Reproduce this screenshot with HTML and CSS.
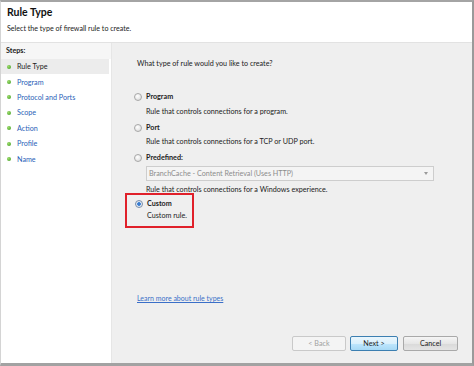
FILE: index.html
```html
<!DOCTYPE html>
<html>
<head>
<meta charset="utf-8">
<link rel="stylesheet" href="styles.css">
</head>
<body>
<div class="window">
  <header class="head">
    <h1 class="title">Rule Type</h1>
    <p class="subtitle">Select the type of firewall rule to create.</p>
  </header>
  <div class="body">
    <aside class="steps">
      <div class="steps-title">Steps:</div>
      <ul class="step-list">
        <li class="step current"><span class="dot"></span>Rule Type</li>
        <li class="step"><span class="dot"></span>Program</li>
        <li class="step"><span class="dot"></span>Protocol and Ports</li>
        <li class="step"><span class="dot"></span>Scope</li>
        <li class="step"><span class="dot"></span>Action</li>
        <li class="step"><span class="dot"></span>Profile</li>
        <li class="step"><span class="dot"></span>Name</li>
      </ul>
    </aside>
    <main class="content">
      <p class="question">What type of rule would you like to create?</p>
      <div class="options">
        <div class="option opt-program">
          <span class="radio"></span>
          <div class="opt-text">
            <div class="opt-label">Program</div>
            <div class="opt-desc">Rule that controls connections for a program.</div>
          </div>
        </div>
        <div class="option opt-port">
          <span class="radio"></span>
          <div class="opt-text">
            <div class="opt-label">Port</div>
            <div class="opt-desc">Rule that controls connections for a TCP or UDP port.</div>
          </div>
        </div>
        <div class="option opt-predef">
          <span class="radio"></span>
          <div class="opt-text wide">
            <div class="opt-label">Predefined:</div>
            <div class="select"><span class="select-text">BranchCache - Content Retrieval (Uses HTTP)</span><span class="arrow"></span></div>
            <div class="opt-desc">Rule that controls connections for a Windows experience.</div>
          </div>
        </div>
        <div class="custom-box">
          <div class="option opt-custom">
            <span class="radio checked"></span>
            <div class="opt-text">
              <div class="opt-label">Custom</div>
              <div class="opt-desc">Custom rule.</div>
            </div>
          </div>
        </div>
      </div>
      <a class="learn" href="#">Learn more about rule types</a>
      <div class="buttons">
        <button class="btn back disabled">&lt; Back</button>
        <button class="btn next default">Next &gt;</button>
        <button class="btn cancel">Cancel</button>
      </div>
    </main>
  </div>
</div>
</body>
</html>
```

FILE: styles.css
```css
html, body {
  margin: 0;
  padding: 0;
  background: #9f9f9f;
}
.window {
  width: 474px;
  height: 366px;
  box-sizing: border-box;
  border-top: 2px solid #a4a4a4;
  border-right: 2px solid #9a9a9a;
  border-bottom: 3px solid #a2a2a2;
  border-left: 1px solid #d4d4d4;
  display: flex;
  flex-direction: column;
  font-family: Lato, "Noto Sans", sans-serif;
  font-size: 7.2px;
  color: #222;
  background: #fff;
  white-space: nowrap;
}
.head {
  height: 40px;
  flex: none;
  background: #fff;
  border-bottom: 1px solid #e2e2e2;
  padding: 0 0 0 6px;
}
.title {
  margin: 3px 0 0;
  font-size: 10.5px;
  font-weight: bold;
  line-height: 14px;
  color: #111;
}
.subtitle {
  margin: 5px 0 0;
  line-height: 10px;
  font-size: 7.1px;
}
.body {
  flex: 1;
  display: flex;
  min-height: 0;
}
.steps {
  width: 110px;
  flex: none;
  background: #fff;
  border-right: 1px solid #e6e6e6;
}
.steps-title {
  height: 16px;
  box-sizing: border-box;
  padding: 2px 0 0 5px;
  line-height: 11px;
  font-weight: bold;
  background: #f6f6f6;
}
.step-list {
  list-style: none;
  margin: 0;
  padding: 0;
}
.step {
  height: 15.4px;
  display: flex;
  align-items: center;
  color: #2a5fb8;
  padding-left: 6px;
  margin-right: 2px;
}
.step.current {
  color: #1c1c1c;
  background: #ececec;
}
.dot {
  width: 4px;
  height: 4px;
  border-radius: 50%;
  background: radial-gradient(circle at 35% 35%, #9ddc6a, #3c9a20);
  margin-right: 6px;
}
.content {
  flex: 1;
  background: #efefef;
  padding: 0 0 0 13px;
  display: flex;
  flex-direction: column;
}
.question {
  margin: 16px 0 0 12px;
  line-height: 10px;
}
.options {
  margin-top: 23px;
  display: flex;
  flex-direction: column;
}
.option {
  display: flex;
  align-items: flex-start;
  padding-left: 9px;
}
.opt-port { margin-top: 6px; }
.opt-predef { margin-top: 6px; }
.radio {
  width: 6px;
  height: 6px;
  border-radius: 50%;
  border: 1px solid #a8a8a8;
  background: radial-gradient(circle at 40% 35%, #ffffff, #d6d6d6);
  margin-top: 1px;
  margin-right: 4px;
  flex: none;
}
.radio.checked {
  border-color: #7a8ea8;
  background: radial-gradient(circle, #2c6fc4 0, #4a8ad8 1.6px, #e8eef6 2.2px, #d8dde5 100%);
}
.opt-text.wide { flex: 1; }
.opt-label {
  font-weight: bold;
  line-height: 10px;
}
.opt-desc {
  line-height: 10px;
}
.opt-program .opt-desc { margin-top: 5px; }
.opt-port .opt-desc { margin-top: 4px; }
.select {
  margin: 3px 38px 0 0;
  height: 15px;
  box-sizing: border-box;
  border: 1px solid #cdcdcd;
  background: #f4f4f4;
  display: flex;
  align-items: center;
  justify-content: space-between;
  color: #8c8c8c;
  padding: 0 5px 0 2px;
}
.select + .opt-desc { margin-top: 4px; }
.arrow {
  width: 0;
  height: 0;
  border-left: 2.5px solid transparent;
  border-right: 2.5px solid transparent;
  border-top: 3px solid #9a9a9a;
}
.custom-box {
  align-self: flex-start;
  width: 69px;
  box-sizing: border-box;
  margin-top: -2px;
  border: 2px solid #e0202a;
  padding: 4px 0 5px 0;
}
.custom-box .option { padding-left: 8px; }
.opt-custom .opt-desc { margin-top: 2px; }
.learn {
  margin: 65px 0 0 12px;
  align-self: flex-start;
  color: #3a6fc8;
  line-height: 10px;
  font-size: 7px;
}
.buttons {
  margin-top: auto;
  margin-bottom: 12px;
  display: flex;
  justify-content: flex-end;
  padding-right: 14px;
}
.btn {
  font: inherit;
  height: 15px;
  padding: 0;
  border: 1px solid #a9a9a9;
  border-radius: 2px;
  background: linear-gradient(#f5f5f5, #e6e6e6 50%, #d9d9d9 51%, #e4e4e4);
  color: #1c1c1c;
}
.btn.back { width: 54px; }
.btn.next { width: 48px; margin-left: 4px; }
.btn.cancel { width: 55px; margin-left: 5px; }
.btn.disabled {
  color: #a0a0a0;
  border-color: #c9c9c9;
  background: #f4f4f4;
}
.btn.default {
  border-color: #3c7fb1;
  background: linear-gradient(#eaf6fd, #d9f0fc 50%, #bee6fd 51%, #a7d9f5);
}
```
